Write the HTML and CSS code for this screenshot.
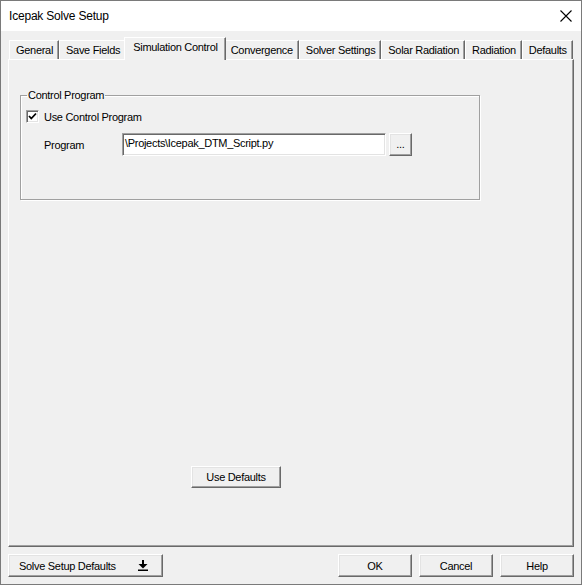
FILE: index.html
```html
<!DOCTYPE html>
<html lang="en">
<head>
  <meta charset="UTF-8" />
  <title>Icepak Solve Setup</title>
  <link rel="stylesheet" href="styles.css">
</head>
<body>

<div class="window">
  <div class="titlebar">
    <span class="title">Icepak Solve Setup</span>
    <svg class="close" width="12" height="12" viewBox="0 0 12 12">
      <path d="M0.5 0.5 L11.5 11.5 M11.5 0.5 L0.5 11.5" stroke="#000" stroke-width="1.1" fill="none" />
    </svg>
  </div>

  <div class="dialog">
    <!-- tabs -->
    <div class="tabs">
      <div class="tab">General</div>
      <div class="tab">Save Fields</div>
      <div class="tab active">Simulation Control</div>
      <div class="tab">Convergence</div>
      <div class="tab">Solver Settings</div>
      <div class="tab">Solar Radiation</div>
      <div class="tab">Radiation</div>
      <div class="tab">Defaults</div>
    </div>

    <div class="panel">
      <fieldset class="group">
        <legend>Control Program</legend>
        <div class="check-row">
          <span class="checkbox">
            <svg width="9" height="9" viewBox="0 0 9 9">
              <path d="M1 4 L3.3 6.5 L8 1.5" stroke="#000" stroke-width="1.8" fill="none" />
            </svg>
          </span>
          <span>Use Control Program</span>
        </div>
        <div class="field-row">
          <span class="field-label">Program</span>
          <div class="textbox">\Projects\Icepak_DTM_Script.py</div>
          <div class="btn browse">...</div>
        </div>
      </fieldset>

      <div class="btn use-defaults">Use Defaults</div>
    </div>

    <!-- bottom buttons -->
    <div class="footer">
      <div class="btn menu-btn">
        <span>Solve Setup Defaults</span>
        <svg width="10" height="11" viewBox="0 0 10 11">
          <rect x="4" y="0" width="2" height="4" fill="#000" />
          <path d="M0.5 4 L9.5 4 L5 8.5 Z" fill="#000" />
          <rect x="0" y="9.5" width="10" height="1.5" fill="#000" />
        </svg>
      </div>
      <div class="footer-right">
        <div class="btn action">OK</div>
        <div class="btn action">Cancel</div>
        <div class="btn action">Help</div>
      </div>
    </div>
  </div>
</div>

</body>
</html>
```

FILE: styles.css
```css
html, body {
  margin: 0;
  padding: 0;
  font-family: "Liberation Sans", Arial, sans-serif;
  font-size: 11px;
  color: #000;
  box-sizing: border-box;
}
*, *::before, *::after {
  box-sizing: inherit;
}
.window {
  width: 582px;
  height: 585px;
  border: 1px solid #7a7a7a;
  background: #f0f0f0;
  display: flex;
  flex-direction: column;
}
.titlebar {
  height: 30px;
  background: #fff;
  display: flex;
  align-items: center;
  justify-content: space-between;
  padding: 0 9px 0 8px;
}
.title {
  font-size: 12px;
  letter-spacing: -0.2px;
}
.dialog {
  flex: 1;
  display: flex;
  flex-direction: column;
  padding: 6px 7px 7px 7px;
}
.tabs {
  height: 22px;
  display: flex;
  align-items: flex-end;
  padding-left: 1px;
  position: relative;
  z-index: 1;
}
.tab {
  height: 19px;
  line-height: 18px;
  padding: 0 5px 0 6px;
  letter-spacing: -0.3px;
  border-top: 1px solid #fff;
  border-left: 1px solid #fff;
  border-right: 1px solid #696969;
  box-shadow: inset -1px 0 0 #a0a0a0;
  white-space: nowrap;
}
.tab.active {
  height: 23px;
  line-height: 18px;
  margin: 0 -2px -1px -2px;
  padding: 0 7px 0 8px;
  background: #f0f0f0;
  position: relative;
  z-index: 2;
}
.panel {
  flex: 1;
  border: 1px solid;
  border-color: #fff #696969 #696969 #fff;
  box-shadow: inset -1px -1px 0 #a0a0a0;
  padding: 29px 0 0 11px;
}
.group {
  width: 460px;
  margin: 0;
  padding: 8px 0 43px 5px;
  border: 1px solid #a0a0a0;
  box-shadow: inset 1px 1px 0 #fff, 1px 1px 0 #fff;
}
.group legend {
  margin-left: 1px;
  padding: 0 1px;
  line-height: 13px;
  letter-spacing: -0.3px;
}
.check-row {
  display: flex;
  align-items: center;
  height: 13px;
  letter-spacing: -0.3px;
}
.checkbox {
  width: 13px;
  height: 13px;
  margin-right: 5px;
  background: #fff;
  border: 1px solid;
  border-color: #a0a0a0 #fff #fff #a0a0a0;
  box-shadow: inset 1px 1px 0 #696969, inset -1px -1px 0 #e3e3e3;
  display: flex;
  align-items: center;
  justify-content: center;
}
.field-row {
  display: flex;
  align-items: center;
  margin-top: 10px;
  padding-left: 18px;
}
.field-label {
  width: 78px;
  letter-spacing: -0.3px;
}
.textbox {
  width: 264px;
  height: 23px;
  line-height: 19px;
  padding: 0 2px;
  background: #fff;
  border: 1px solid;
  border-color: #a0a0a0 #fff #fff #a0a0a0;
  box-shadow: inset 1px 1px 0 #696969, inset -1px -1px 0 #e3e3e3;
  letter-spacing: -0.3px;
  white-space: nowrap;
  overflow: hidden;
}
.btn {
  display: flex;
  align-items: center;
  justify-content: center;
  height: 23px;
  background: #f0f0f0;
  border: 1px solid;
  border-color: #fff #696969 #696969 #fff;
  box-shadow: inset -1px -1px 0 #a0a0a0, inset 1px 1px 0 #e3e3e3;
  letter-spacing: -0.3px;
  white-space: nowrap;
}
.browse {
  width: 23px;
  margin-left: 3px;
  padding-bottom: 2px;
}
.use-defaults {
  width: 90px;
  height: 22px;
  margin: 266px 0 0 171px;
}
.footer {
  display: flex;
  justify-content: space-between;
  margin-top: 7px;
}
.menu-btn {
  width: 155px;
  justify-content: space-between;
  padding: 0 14px 0 10px;
}
.footer-right {
  display: flex;
  gap: 7px;
}
.action {
  width: 74px;
}
```
